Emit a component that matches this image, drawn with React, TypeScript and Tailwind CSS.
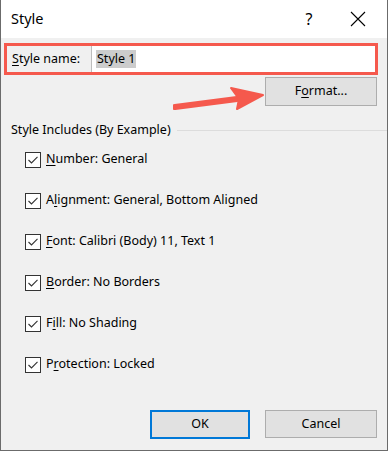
import React from "react";

const font = { fontFamily: '"Segoe UI", "Noto Sans", "Open Sans", sans-serif' };

const items: { pre: string; key: string; rest: string }[] = [
  { pre: "", key: "N", rest: "umber: General" },
  { pre: "A", key: "l", rest: "ignment: General, Bottom Aligned" },
  { pre: "", key: "F", rest: "ont: Calibri (Body) 11, Text 1" },
  { pre: "", key: "B", rest: "order: No Borders" },
  { pre: "F", key: "i", rest: "ll: No Shading" },
  { pre: "P", key: "r", rest: "otection: Locked" },
];

const CheckBox = () => (
  <span className="flex h-[16px] w-[16px] items-center justify-center border border-[#333333] bg-white">
    <svg width="12" height="12" viewBox="0 0 12 12">
      <path d="M1.5 6 L4.5 9 L10.5 2.8" fill="none" stroke="#333333" strokeWidth="1.1" />
    </svg>
  </span>
);

export default function App() {
  return (
    <div
      className="flex h-[451px] w-[388px] flex-col border-x border-b border-x-[#6b6b6b] border-b-[#6b6b6b] bg-[#f0f0f0] text-[12.5px] text-black"
      style={font}
    >
      {/* title bar */}
      <div className="flex h-[38px] items-center bg-white pl-[10px]">
        <span className="flex-1 text-[14.5px]">Style</span>
        <span className="w-[40px] text-center text-[16px]">?</span>
        <span className="flex w-[58px] items-center justify-center">
          <svg width="16" height="16" viewBox="0 0 16 16">
            <path d="M1 1 L15 15 M15 1 L1 15" stroke="#000" strokeWidth="1.1" />
          </svg>
        </span>
      </div>

      {/* style name row */}
      <div className="relative ml-[3px] mr-[9px] mt-[5px] flex h-[32px] items-stretch border-[3px] border-[#f5594d] bg-white">
        <span className="flex w-[84px] items-center bg-[#f0f0f0] pl-[5px]">
          <span className="underline underline-offset-2">S</span>tyle name:
        </span>
        <span className="flex flex-1 items-center border-l border-[#bdbdbd] pl-[4px]">
          <span className="bg-[#cccccc] px-[1px]">Style 1</span>
        </span>
      </div>

      {/* format button + arrow */}
      <div className="relative flex h-[32px] items-start justify-end pr-[10px] pt-[2px]">
        <svg className="absolute left-[172px] top-[10px]" width="92" height="26" viewBox="0 0 92 26">
          <path d="M2 22 L64 14" stroke="#f5594d" strokeWidth="6" strokeLinecap="round" />
          <path d="M58 3 L90 10 L64 24 L66 14 Z" fill="#f5594d" stroke="#f5594d" strokeWidth="2" strokeLinejoin="round" />
        </svg>
        <button className="h-[29px] w-[112px] border border-[#adadad] bg-[#e1e1e1]">
          F<span className="underline underline-offset-2">o</span>rmat...
        </button>
      </div>

      {/* group */}
      <div className="mt-[14px] flex items-center pl-[10px]">
        <span>Style Includes (By Example)</span>
        <span className="ml-[6px] h-px flex-1 bg-[#dcdcdc]" />
      </div>

      <div className="mt-[12px] flex flex-col gap-[25px] pl-[24px]">
        {items.map((it) => (
          <div key={it.rest} className="flex h-[16px] items-center gap-[5px]">
            <CheckBox />
            <span>
              {it.pre}
              <span className="underline underline-offset-2">{it.key}</span>
              {it.rest}
            </span>
          </div>
        ))}
      </div>

      {/* buttons */}
      <div className="mt-auto mb-[11px] flex justify-end gap-[15px] pr-[10px]">
        <button className="h-[29px] w-[100px] border-2 border-[#0078d7] bg-[#e1e1e1]">OK</button>
        <button className="h-[28px] w-[112px] border border-[#adadad] bg-[#e1e1e1]">Cancel</button>
      </div>
    </div>
  );
}
